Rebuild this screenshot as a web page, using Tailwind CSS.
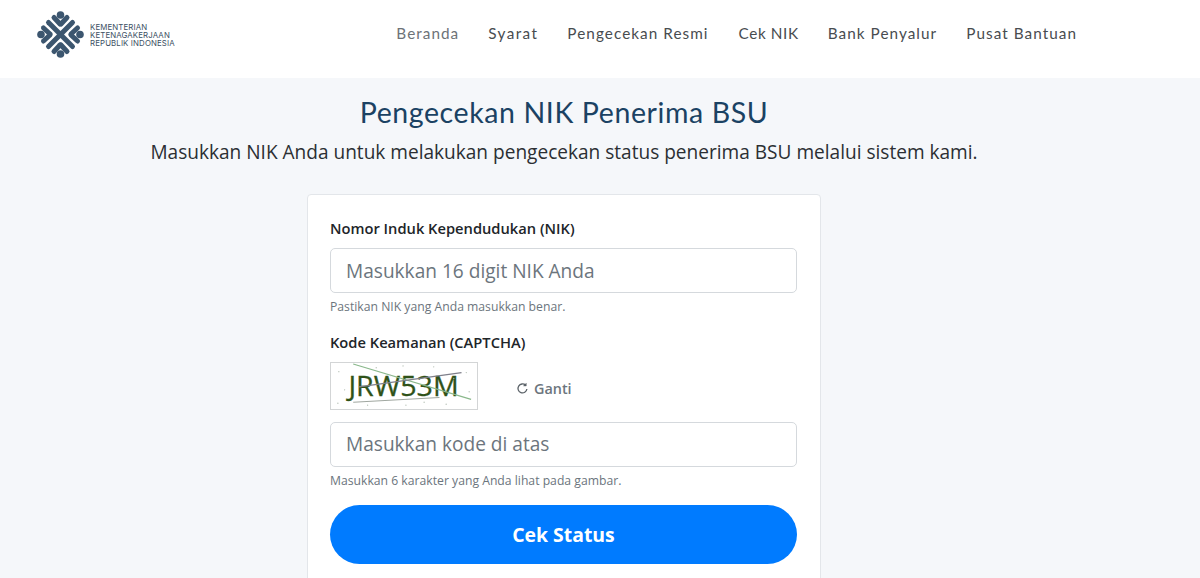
<!DOCTYPE html>
<html lang="id">
<head>
  <meta charset="UTF-8" />
  <title>Pengecekan NIK Penerima BSU</title>
  <script src="https://cdn.jsdelivr.net/npm/@tailwindcss/browser@4"></script>
</head>
<body class="h-[578px] overflow-hidden bg-[#f5f7fa] font-['Open_Sans',sans-serif] text-[#212529]">
  <!-- Header -->
  <header class="h-[78px] bg-white flex items-center justify-between pl-[37px] pr-[123px]">
    <div class="flex items-center gap-[6px] -mt-[9px]">
      <svg width="47" height="47" viewBox="0 0 47 47" fill="#3c566f">
        <circle cx="23.5" cy="4" r="3.8" />
        <circle cx="4" cy="23.5" r="3.8" />
        <circle cx="43" cy="23.5" r="3.8" />
        <circle cx="23.5" cy="43" r="3.8" />
        <g stroke="#3c566f" stroke-width="5" stroke-linecap="round" fill="none">
          <path d="M11.5 11.5 L35.5 35.5" />
          <path d="M35.5 11.5 L11.5 35.5" />
          <path d="M17 6.5 L23 13" />
          <path d="M30 6.5 L24 13" />
          <path d="M6.5 17 L13 23" />
          <path d="M40.5 17 L34 23" />
          <path d="M6.5 30 L13 24" />
          <path d="M40.5 30 L34 24" />
          <path d="M17 40.5 L23 34" />
          <path d="M30 40.5 L24 34" />
        </g>
      </svg>
      <div class="font-['Inter',sans-serif] text-[7.85px] leading-[8px] tracking-[0.12px] text-[#3c4f63] mt-[1px]">
        <div>KEMENTERIAN</div>
        <div>KETENAGAKERJAAN</div>
        <div>REPUBLIK INDONESIA</div>
      </div>
    </div>
    <nav class="flex items-center gap-[29px] font-['Lato',sans-serif] text-[15.3px] tracking-[1.05px] -mt-[11px]">
      <a class="text-[#6d7277]">Beranda</a>
      <a class="text-[#484c50] tracking-[1.4px]">Syarat</a>
      <a class="text-[#484c50]">Pengecekan Resmi</a>
      <a class="text-[#484c50] tracking-[0.6px] ml-px">Cek NIK</a>
      <a class="text-[#484c50]">Bank Penyalur</a>
      <a class="text-[#484c50]">Pusat Bantuan</a>
    </nav>
  </header>

  <!-- Main -->
  <main class="flex flex-col items-center pr-[72px]">
    <h1 class="mt-[14px] h-[40px] leading-[40px] font-['Lato',sans-serif] text-[28.5px] tracking-[0.6px] text-[#1b4263]">Pengecekan NIK Penerima BSU</h1>
    <p class="mt-[6px] h-[28px] leading-[28px] text-[19.07px] text-[#2b2f33]">Masukkan NIK Anda untuk melakukan pengecekan status penerima BSU melalui sistem kami.</p>

    <div class="mt-[28px] w-[514px] bg-white border border-[#e3e6ea] rounded-[4px] pl-[22px] pr-[23px] pt-[22px] pb-[40px] shrink-0">
      <label class="block h-[22px] leading-[22px] text-[14.7px] font-semibold text-[#212529]">Nomor Induk Kependudukan (NIK)</label>
      <div class="mt-[9px] h-[45px] border border-[#d5d9dd] rounded-[5px] px-[15px] pt-[2px] flex items-center text-[19.1px] text-[#6c757d]">Masukkan 16 digit NIK Anda</div>
      <p class="mt-[5px] h-[18px] leading-[18px] text-[12.2px] text-[#6c757d]">Pastikan NIK yang Anda masukkan benar.</p>

      <label class="block mt-[15px] h-[22px] leading-[22px] text-[14.7px] font-semibold text-[#212529]">Kode Keamanan (CAPTCHA)</label>
      <div class="mt-[9px] flex items-center">
        <svg width="148" height="48" viewBox="0 0 148 48" class="border border-[#d3d5d6] bg-white">
          <text x="16" y="34" font-family="'Open Sans', sans-serif" font-size="29" textLength="115" lengthAdjust="spacingAndGlyphs" fill="#2f5219" stroke="#2f5219" stroke-width="0.3">JRW53M</text>
          <path d="M21 1 L144 38" stroke="#8ab88c" stroke-width="1.2" fill="none" />
          <path d="M27 25 L134 10" stroke="#7f7f8a" stroke-width="1.4" fill="none" />
          <path d="M21 41 L111 36" stroke="#a0a7a0" stroke-width="1.2" fill="none" />
          <g fill="#b5c0b5">
            <circle cx="6" cy="9" r="0.7" /><circle cx="12" cy="28" r="0.7" /><circle cx="5" cy="42" r="0.7" />
            <circle cx="45" cy="5" r="0.7" /><circle cx="60" cy="13" r="0.7" /><circle cx="73" cy="3" r="0.7" />
            <circle cx="118" cy="43" r="0.7" /><circle cx="126" cy="16" r="0.7" /><circle cx="139" cy="10" r="0.7" />
            <circle cx="142" cy="30" r="0.7" /><circle cx="76" cy="44" r="0.7" /><circle cx="95" cy="41" r="0.7" />
            <circle cx="36" cy="44" r="0.7" /><circle cx="105" cy="4" r="0.7" />
          </g>
        </svg>
        <button class="ml-[38px] mt-[6px] flex items-center gap-[5px] text-[14.4px] font-semibold text-[#6c757d]">
          <svg width="13" height="13" viewBox="0 0 16 16" fill="none" stroke="#5b6268" stroke-width="1.6">
            <path d="M13.4 8.6 A5.5 5.5 0 1 1 11.8 4" />
            <path d="M12.6 1.2 V4.8 H9" fill="#5b6268" stroke-width="0.6" />
          </svg>
          Ganti
        </button>
      </div>
      <div class="mt-[12px] h-[45px] border border-[#d5d9dd] rounded-[5px] px-[15px] flex items-center text-[19.1px] text-[#6c757d]">Masukkan kode di atas</div>
      <p class="mt-[5px] h-[18px] leading-[18px] text-[12.2px] text-[#6c757d]">Masukkan 6 karakter yang Anda lihat pada gambar.</p>
      <button class="mt-[15px] w-full h-[59px] rounded-full bg-[#007bff] text-white text-[19.4px] font-bold">Cek Status</button>
    </div>
  </main>
</body>
</html>
